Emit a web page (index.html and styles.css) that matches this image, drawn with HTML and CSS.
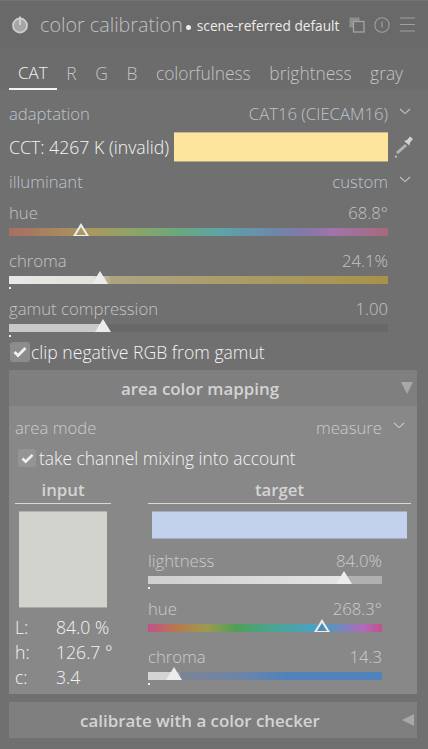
FILE: index.html
```html
<!DOCTYPE html>
<html lang="en">
<head>
<meta charset="utf-8">
<title>color calibration</title>
<link rel="stylesheet" href="styles.css">
</head>
<body>
<div class="module">
  <header class="head">
    <svg class="power" viewBox="0 0 18 18" width="18" height="18"><circle cx="9" cy="9.500" r="7" fill="#a6a6a6" stroke="#cccccc" stroke-width="1.800"/><rect x="8.100" y="0.500" width="1.800" height="8.500" fill="#d4d4d4"/></svg>
    <span class="title">color calibration</span>
    <span class="dot"></span>
    <span class="preset">scene-referred default</span>
    <svg class="hicon multi" viewBox="0 0 16 16" width="16" height="16"><rect x="0.500" y="0.500" width="10" height="10" fill="#8e8e8e"/><rect x="4.500" y="4.500" width="10.500" height="10.500" fill="#696969" stroke="#a4a4a4" stroke-width="1.300"/></svg>
    <svg class="hicon info" viewBox="0 0 16 16" width="16" height="16"><circle cx="8" cy="8" r="7.200" fill="none" stroke="#a0a0a0" stroke-width="1.100"/><rect x="7.400" y="4.500" width="1.200" height="6" fill="#a0a0a0"/></svg>
    <svg class="hicon menu" viewBox="0 0 15 15" width="15" height="15"><path d="M0 1h15M0 7.500h15M0 14h15" stroke="#a0a0a0" stroke-width="1.100"/></svg>
  </header>

  <nav class="tabs">
    <span class="tab active">CAT</span>
    <span class="tab">R</span>
    <span class="tab">G</span>
    <span class="tab">B</span>
    <span class="tab">colorfulness</span>
    <span class="tab">brightness</span>
    <span class="tab">gray</span>
  </nav>

  <div class="main">
    <div class="combo combo-adapt">
      <span>adaptation</span><span class="combo-val">CAT16 (CIECAM16)</span>
      <svg class="chev" viewBox="0 0 12 7" width="12" height="7"><path d="M1 1l5 4.600L11 1" fill="none" stroke="#c2c2c2" stroke-width="1.100"/></svg>
    </div>
    <div class="cct">
      <span class="cct-text">CCT: 4267 K (invalid)</span>
      <span class="cct-swatch"></span>
      <svg class="picker" viewBox="0 0 20 22" width="20" height="22"><path d="M2 16l9-8 2 2-9 8z" fill="#b4b4b4"/><path d="M10 5l3-1 3-3.500 3 2.500-3 3.500-.5 3z" fill="#d2d2d2"/><path d="M2 19c-1 1.500-1.300 2-.7 2.600.7.500 1.500 0 1.500-.8 0-.5-.4-1.200-.8-1.800z" fill="#c8c8c8"/></svg>
    </div>
    <div class="combo combo-illum">
      <span>illuminant</span><span class="combo-val">custom</span>
      <svg class="chev" viewBox="0 0 12 7" width="12" height="7"><path d="M1 1l5 4.600L11 1" fill="none" stroke="#c2c2c2" stroke-width="1.100"/></svg>
    </div>

    <div class="slider s-main">
      <div class="slider-top"><span>hue</span><span>68.8°</span></div>
      <div class="track g-hue1"><span class="thumb outline t-hue1"></span></div>
    </div>
    <div class="slider s-main">
      <div class="slider-top"><span>chroma</span><span>24.1%</span></div>
      <div class="track g-chroma1"><span class="thumb t-chroma1"></span></div>
      <span class="tick"></span>
    </div>
    <div class="slider s-main">
      <div class="slider-top"><span>gamut compression</span><span>1.00</span></div>
      <div class="track g-gamut"><span class="thumb t-gamut"></span></div>
      <span class="tick"></span>
    </div>

    <label class="check check-main"><span class="box"><svg viewBox="0 0 14 12" width="14" height="12"><path d="M1.500 6l3.500 3.500L12.500 2" fill="none" stroke="#f0f0f0" stroke-width="2.800"/></svg></span>clip negative RGB from gamut</label>

    <div class="section-head open">
      <span>area color mapping</span>
      <span class="tri-down"></span>
    </div>
    <section class="area">
      <div class="combo combo-area">
        <span>area mode</span><span class="combo-val">measure</span>
        <svg class="chev" viewBox="0 0 12 7" width="12" height="7"><path d="M1 1l5 4.600L11 1" fill="none" stroke="#c8c8c8" stroke-width="1.100"/></svg>
      </div>
      <label class="check check-area"><span class="box small"><svg viewBox="0 0 14 12" width="13" height="11"><path d="M1.500 6l3.500 3.500L12.500 2" fill="none" stroke="#f0f0f0" stroke-width="2.800"/></svg></span>take channel mixing into account</label>
      <div class="cols">
        <div class="col-input">
          <div class="col-title">input</div>
          <div class="swatch-input"></div>
          <dl class="readout">
            <dt>L:</dt><dd>84.0 %</dd>
            <dt>h:</dt><dd>126.7 °</dd>
            <dt>c:</dt><dd>3.4</dd>
          </dl>
        </div>
        <div class="col-target">
          <div class="col-title">target</div>
          <div class="swatch-target"></div>
          <div class="target-sliders">
            <div class="slider s-sub">
              <div class="slider-top"><span>lightness</span><span>84.0%</span></div>
              <div class="track g-light"><span class="thumb t-light"></span></div>
              <span class="tick"></span>
            </div>
            <div class="slider s-sub">
              <div class="slider-top"><span>hue</span><span>268.3°</span></div>
              <div class="track g-hue2"><span class="thumb outline blue t-hue2"></span></div>
            </div>
            <div class="slider s-sub">
              <div class="slider-top"><span>chroma</span><span>14.3</span></div>
              <div class="track g-chroma2"><span class="thumb t-chroma2"></span></div>
              <span class="tick"></span>
            </div>
          </div>
        </div>
      </div>
    </section>
    <div class="section-head closed">
      <span>calibrate with a color checker</span>
      <span class="tri-left"></span>
    </div>
  </div>
</div>
</body>
</html>
```
FILE: styles.css
```css
* { box-sizing: border-box; }
html, body { margin: 0; height: 100%; }
body {
  width: 428px;
  height: 749px;
  overflow: hidden;
  background: #686868;
  font-family: "Open Sans", "Noto Sans", sans-serif;
  font-size: 16px;
  font-weight: 300;
  color: #c4c4c4;
}
.module { display: flex; flex-direction: column; height: 100%; }

.head {
  height: 48px;
  background: #696969;
  border-top: 1px solid #737373;
  display: flex;
  align-items: center;
  padding: 0 13px 0 11px;
}
.power { margin-right: 11px; flex: none; }
.title { font-size: 19.750px; color: #c0c0c0; line-height: 24px; white-space: nowrap; }
.dot { width: 5px; height: 5px; border-radius: 50%; background: #eee; margin: 5px 6px 0 3px; flex: none; }
.preset { font-size: 13.700px; font-weight: 400; color: #ececec; margin-top: 2px; white-space: nowrap; }
.hicon { flex: none; }
.multi { margin-left: auto; }
.info { margin-left: 9px; }
.menu { margin-left: 10px; }

.tabs {
  height: 42px;
  background: #6c6c6c;
  display: flex;
  padding: 0 0 0 9px;
  font-size: 17.400px;
  color: #c4c4c4;
}
.tab { padding: 0 9px; line-height: 50px; height: 42px; margin-right: 0.600px; white-space: nowrap; }
.tab.active { color: #f4f4f4; border-bottom: 2px solid #f2f2f2; font-size: 17px; }

.main { background: #707070; flex: 1; display: flex; flex-direction: column; padding: 0 11px 11px 9px; }

.combo { display: flex; align-items: center; height: 24px; padding: 0 6px 2px 0; color: #bcc4ce; font-size: 16.700px; }
.combo-val { margin-left: auto; }
.chev { margin-left: 11px; margin-bottom: 3px; flex: none; }
.combo-adapt { margin-top: 12px; }
.combo-illum { margin-top: 8px; }

.cct { display: flex; align-items: center; height: 30px; margin-top: 6px; }
.cct-text { font-size: 17.700px; font-weight: 300; color: #f4f4f4; white-space: nowrap; flex: none; width: 165px; }
.cct-swatch { width: 214px; height: 30px; background: #fee59e; border-top: 1px solid #c9b884; border-bottom: 1px solid #b5a67c; }
.picker { margin-left: 6px; }

.slider { position: relative; display: flex; flex-direction: column; }
.s-main { width: 379px; height: 48px; }
.slider-top { display: flex; justify-content: space-between; height: 24px; line-height: 24px; font-size: 16.700px; color: #c4c4c4; margin-top: 7px; }
.track { position: relative; height: 8px; margin-top: 3px; }
.tick { position: absolute; left: 0; width: 2px; height: 2px; background: #eee; top: 45px; }
.thumb {
  position: absolute;
  top: -5px;
  width: 0;
  height: 0;
  margin-left: -8px;
  border-left: 8px solid transparent;
  border-right: 8px solid transparent;
  border-bottom: 13px solid #ececec;
}
.thumb.outline::after {
  content: "";
  position: absolute;
  left: -5px;
  top: 4px;
  border-left: 5px solid transparent;
  border-right: 5px solid transparent;
  border-bottom: 8px solid #a89a62;
}
.thumb.outline.blue::after { border-bottom-color: #4e8fb0; }

.g-hue1 { background: linear-gradient(90deg, #a86e62 0%, #a88560 12%, #a89a60 22%, #8ca468 33%, #6aa87f 45%, #5ea3a8 56%, #6c88a8 70%, #8478a8 78%, #a074a8 86%, #a8687c 100%); }
.g-chroma1 { background: linear-gradient(90deg, #e8e8e6 0%, #e2e2de 22%, #aca482 27%, #a8924a 100%); }
.g-gamut { background: linear-gradient(90deg, #c9c9c9 0%, #c9c9c9 25.500%, #686868 25.500%, #686868 100%); }
.g-light { background: linear-gradient(90deg, #cfcfcf 0%, #e4e4e4 84%, #b0b0b0 84%, #b0b0b0 100%); }
.g-hue2 { background: linear-gradient(90deg, #c2508c 0%, #b9784f 12%, #9c9a4f 25%, #4ea058 38%, #4aa58f 52%, #4aa2c0 70%, #5a93bd 78%, #b06cb8 92%, #c2508c 100%); }
.g-chroma2 { background: linear-gradient(90deg, #d4d4d4 0%, #d4d4d4 10%, #7c8496 14%, #6d84a8 40%, #4f83bb 60%, #4f83bb 100%); }
.t-hue1 { left: 19%; }
.t-chroma1 { left: 24%; }
.t-gamut { left: 24.800%; }
.t-light { left: 83.800%; }
.t-hue2 { left: 74.500%; }
.t-chroma2 { left: 11%; }

.check { display: flex; align-items: center; color: #f4f4f4; white-space: nowrap; font-weight: 300; }
.box { display: flex; align-items: center; justify-content: center; background: #8c8c8c; border-radius: 3px; flex: none; }
.check-main { height: 24px; margin-top: 2px; padding-left: 1px; font-size: 17.600px; margin-bottom: 6px; }
.check-main .box { width: 20px; height: 20px; margin-right: 1px; }
.check-area { height: 22px; margin-top: 7px; padding-left: 3px; font-size: 17.400px; }
.box.small { width: 18px; height: 18px; margin-right: 3px; background: #949494; }

.section-head {
  position: relative;
  width: 408px;
  height: 36px;
  flex: none;
  background: #7f7f7f;
  display: flex;
  align-items: center;
  justify-content: center;
  font-weight: 600;
  font-size: 16.900px;
  color: #d4d4d4;
  padding-right: 26px;
}
.tri-down {
  position: absolute; right: 4px; top: 12px;
  border-left: 6px solid transparent; border-right: 6px solid transparent; border-top: 12px solid #a8a8a8;
}
.tri-left {
  position: absolute; right: 3px; top: 12px;
  border-top: 6px solid transparent; border-bottom: 6px solid transparent; border-right: 12px solid #a8a8a8;
}
.area { width: 408px; height: 288px; background: #888; padding: 0 6px; flex: none; }
.combo-area { margin-top: 10px; height: 24px; color: #c8ccd0; }
.closed { margin-top: 8px; }

.cols { display: flex; margin-top: 10px; }
.col-input { width: 96px; flex: none; }
.col-target { width: 263px; margin-left: 37px; flex: none; }
.col-title { height: 25px; line-height: 22px; border-bottom: 1px solid #d8d8d8; text-align: center; font-weight: 600; color: #d4d4d4; font-size: 16.800px; }
.swatch-input { width: 88px; height: 97px; margin: 7px 0 0 4px; background: #d1d3cc; border-top: 1px solid #b0b2ac; border-bottom: 1px solid #a8aaa4; }
.swatch-target { width: 255px; height: 28px; margin: 7px 0 0 4px; background: #c3d2ec; border-top: 1px solid #a0adc4; border-bottom: 1px solid #a0adc4; }
.readout { display: grid; grid-template-columns: 41px 1fr; margin: 7px 0 0 0; font-size: 17.600px; font-weight: 300; color: #f4f4f4; grid-auto-rows: 25px; line-height: 25px; }
.readout dt, .readout dd { margin: 0; white-space: nowrap; }

.target-sliders { width: 234px; margin-top: 10px; }
.s-sub { height: 48px; }
.s-sub .slider-top { margin-top: 0; color: #cccccc; }
.s-sub .tick { top: 38px; }
```
